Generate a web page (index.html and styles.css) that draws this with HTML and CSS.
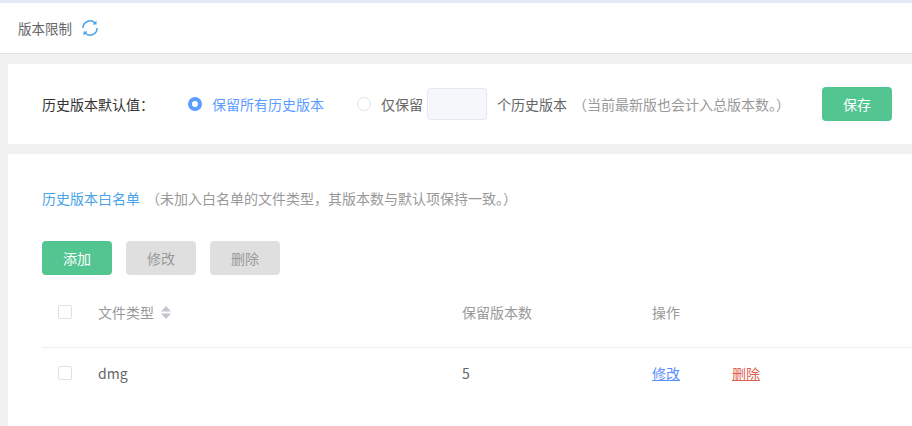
FILE: index.html
```html
<!DOCTYPE html>
<html lang="zh-CN">
<head>
<meta charset="utf-8">
<title>版本限制</title>
<link rel="stylesheet" href="styles.css">
</head>
<body>
<header class="top">
  <span class="top-title">版本限制</span>
  <svg class="refresh" width="18" height="18" viewBox="0 0 18 18" fill="none" stroke="#4aa3e8" stroke-width="1.5">
    <path d="M2 9a7 7 0 0 1 12-5"/>
    <path d="M16 9a7 7 0 0 1-12 5"/>
    <path d="M15.5 1.5v4h-4" fill="#4aa3e8" stroke="none"/>
    <path d="M2.5 16.5v-4h4" fill="#4aa3e8" stroke="none"/>
  </svg>
</header>
<section class="card defaults">
  <span class="label">历史版本默认值：</span>
  <span class="radio radio-on"></span>
  <span class="opt-on">保留所有历史版本</span>
  <span class="radio radio-off"></span>
  <span class="opt">仅保留</span>
  <span class="count-input"></span>
  <span class="opt opt-after">个历史版本</span>
  <span class="note">（当前最新版也会计入总版本数。）</span>
  <button class="btn btn-green btn-save">保存</button>
</section>
<section class="card whitelist">
  <p class="wl-head"><span class="wl-title">历史版本白名单</span><span class="note">（未加入白名单的文件类型，其版本数与默认项保持一致。）</span></p>
  <div class="actions">
    <button class="btn btn-green">添加</button>
    <button class="btn btn-gray">修改</button>
    <button class="btn btn-gray">删除</button>
  </div>
  <div class="row row-head">
    <span class="check"></span>
    <span class="col-type">文件类型<svg class="sort" width="10" height="13" viewBox="0 0 10 13"><path d="M5 0l5 5.5H0z" fill="#c3c5cf"/><path d="M5 13l5-5.5H0z" fill="#c3c5cf"/></svg></span>
    <span class="col-num">保留版本数</span>
    <span class="col-op">操作</span>
  </div>
  <div class="row row-body">
    <span class="check"></span>
    <span class="col-type">dmg</span>
    <span class="col-num">5</span>
    <span class="col-op"><a class="link-edit" href="#">修改</a><a class="link-del" href="#">删除</a></span>
  </div>
</section>
</body>
</html>
```
FILE: styles.css
```css
* { box-sizing: border-box; }
html, body { margin: 0; height: 100%; overflow: hidden; }
body {
  background: #f1f1f2;
  font-family: "Noto Sans CJK SC", "Noto Sans", sans-serif;
  font-size: 14px;
  color: #666;
  border-top: 3px solid #e4e9f3;
}
.top {
  height: 51px;
  background: #fff;
  border-bottom: 1px solid #dfe2ea;
  display: flex;
  align-items: center;
  padding: 0 0 0 18px;
  font-size: 13.5px;
  color: #666;
}
.top-title { width: 55px; }
.refresh { margin-left: 8px; }
.card { background: #fff; margin-left: 8px; }
.defaults {
  margin-top: 10px;
  height: 80px;
  display: flex;
  align-items: center;
  padding-left: 34px;
  white-space: nowrap;
}
.label { color: #333; width: 146px; }
.radio { width: 14px; height: 14px; border-radius: 50%; flex: none; }
.radio-on { background: #fff; border: 4px solid #5c9dff; }
.radio-off { border: 1px solid #e2e3ea; margin-left: 33px; }
.opt-on { color: #5c9dff; margin-left: 10px; }
.opt { color: #666; margin-left: 10px; }
.opt-after { margin-left: 10px; }
.count-input {
  width: 60px;
  height: 32px;
  margin-left: 4px;
  background: #f6f7fb;
  border: 1px solid #e6e8f0;
  border-radius: 3px;
}
.note { color: #999; margin-left: 6px; }
.btn {
  width: 70px;
  height: 34px;
  border: 0;
  border-radius: 4px;
  font: inherit;
  padding: 0;
}
.btn-green { background: #52c591; color: #fff; }
.btn-gray { background: #dfdfdf; color: #999; }
.btn-save { margin-left: 32px; flex: none; }
.whitelist { margin-top: 10px; height: 280px; padding: 34px 0 0 34px; }
.wl-head { margin: 0; line-height: 20px; white-space: nowrap; }
.wl-title { color: #4aa3e8; }
.actions { display: flex; gap: 14px; margin-top: 33px; }
.row { display: flex; align-items: center; white-space: nowrap; }
.row-head { height: 73px; border-bottom: 1px solid #ececf3; color: #999; margin-top: 0; padding-top: 2px; }
.row-body { height: 50px; padding-bottom: 1px; }
.check {
  width: 14px;
  height: 14px;
  margin-left: 16px;
  border: 1px solid #dfe0e8;
  border-radius: 2px;
  background: #fff;
  flex: none;
}
.col-type { margin-left: 26px; width: 364px; display: flex; align-items: center; }
.sort { margin-left: 7px; }
.col-num { width: 190px; }
.col-op { display: flex; }
.link-edit { color: #5c8fff; width: 80px; }
.link-del { color: #e0604f; }
```
